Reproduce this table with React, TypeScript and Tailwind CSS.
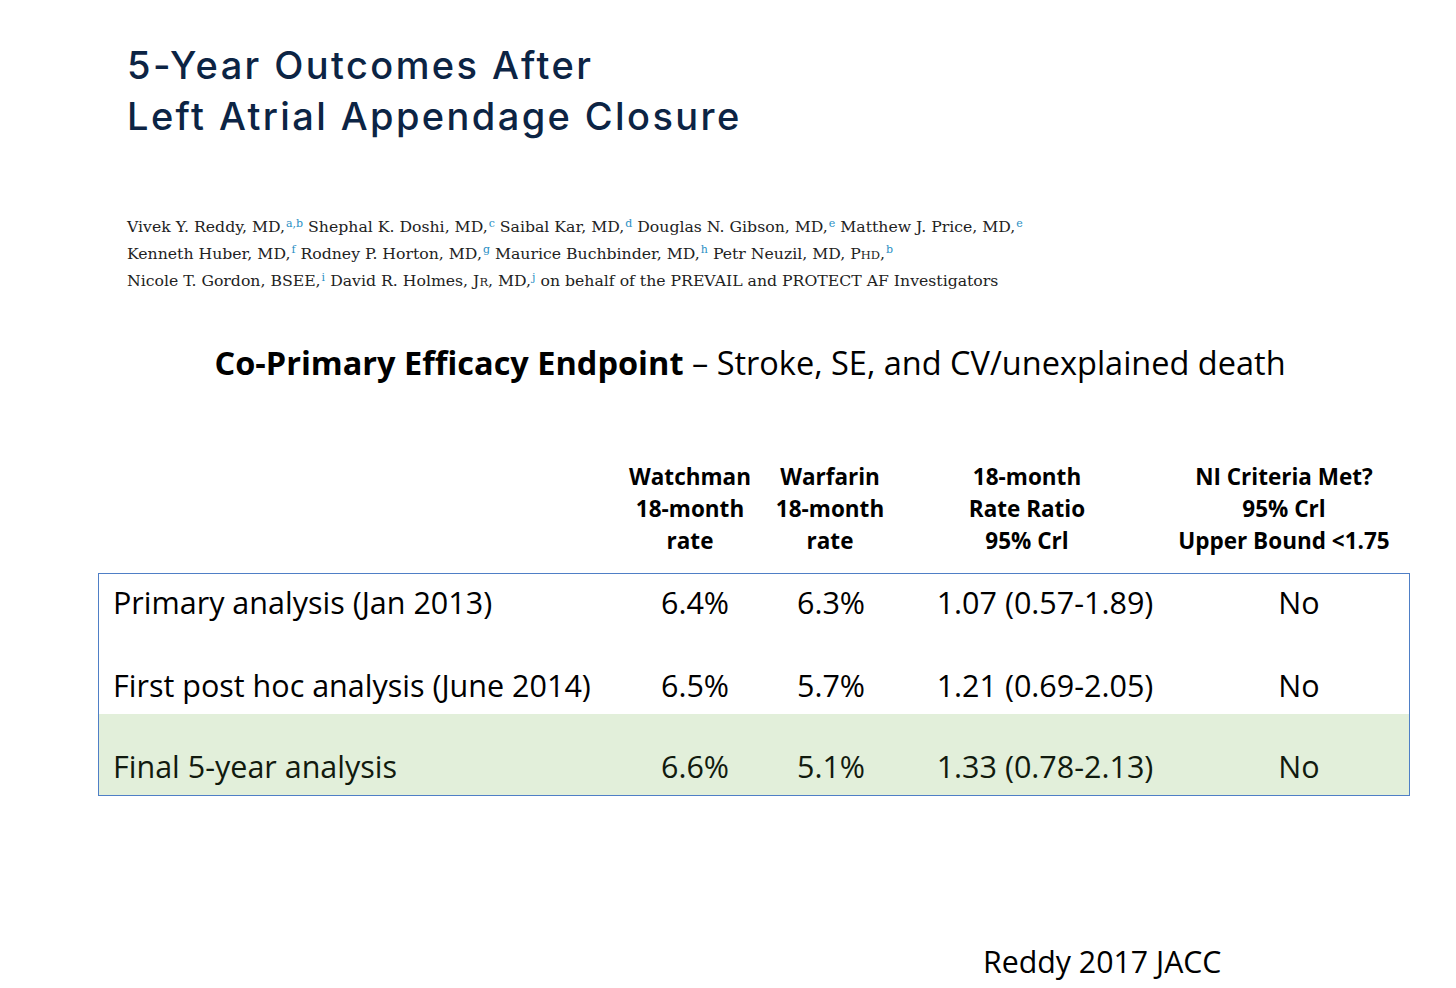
import React from "react";

function Sup({ children }: { children: React.ReactNode }) {
  return <sup className="text-[11px] text-[#2a8fc4] ml-[1px]">{children}</sup>;
}

const rows: [string, string, string, string, string, boolean, string][] = [
  ["Primary analysis (Jan 2013)", "6.4%", "6.3%", "1.07 (0.57-1.89)", "No", false, "h-[57px]"],
  ["First post hoc analysis (June 2014)", "6.5%", "5.7%", "1.21 (0.69-2.05)", "No", false, "h-[83px]"],
  ["Final 5-year analysis", "6.6%", "5.1%", "1.33 (0.78-2.13)", "No", true, "h-[81px]"],
];

export default function App() {
  return (
    <div className="w-[1456px] h-[988px] bg-white text-black overflow-hidden flex flex-col">
      <header className="pl-[127px] pt-[40px] flex flex-col">
        <h1 className="font-['Inter'] text-[38px] leading-[51px] font-medium tracking-[0.063em] text-[#0c2444]">
          5-Year Outcomes After
          <br />
          Left Atrial Appendage Closure
        </h1>
        <div className="mt-[72px] font-['DejaVu_Serif'] text-[15.7px] leading-[26.5px] text-[#222]">
          <div>
            Vivek Y. Reddy, MD,<Sup>a,b</Sup> Shephal K. Doshi, MD,<Sup>c</Sup> Saibal Kar, MD,<Sup>d</Sup> Douglas N. Gibson, MD,<Sup>e</Sup> Matthew J. Price, MD,<Sup>e</Sup>
          </div>
          <div>
            Kenneth Huber, MD,<Sup>f</Sup> Rodney P. Horton, MD,<Sup>g</Sup> Maurice Buchbinder, MD,<Sup>h</Sup> Petr Neuzil, MD, P<span className="text-[11.5px]">HD</span>,<Sup>b</Sup>
          </div>
          <div>
            Nicole T. Gordon, BSEE,<Sup>i</Sup> David R. Holmes, J<span className="text-[11.5px]">R</span>, MD,<Sup>j</Sup> on behalf of the PREVAIL and PROTECT AF Investigators
          </div>
        </div>
      </header>

      <div className="mt-[45px] flex justify-center pl-[44px] font-['Open_Sans']">
        <p className="text-[32.5px] leading-[44px] whitespace-nowrap">
          <span className="font-bold">Co-Primary Efficacy Endpoint</span> – Stroke, SE, and CV/unexplained death
        </p>
      </div>

      <section className="mt-[76px] pl-[98px] flex flex-col font-['Open_Sans']">
        <div className="grid grid-cols-[522px_140px_140px_254px_260px] text-[22.5px] leading-[32px] font-bold text-center">
          <div />
          <div>Watchman<br />18-month<br />rate</div>
          <div>Warfarin<br />18-month<br />rate</div>
          <div>18-month<br />Rate Ratio<br />95% Crl</div>
          <div>NI Criteria Met?<br />95% Crl<br />Upper Bound &lt;1.75</div>
        </div>
        <div className="mt-[16px] w-[1312px] border border-[#4f7fc6] text-[30.5px] leading-[40px] flex flex-col">
          {rows.map((r, i) => (
            <div
              key={i}
              className={`grid grid-cols-[521px_150px_122px_306px_1fr] items-end pb-[9px] ${r[6]} ${r[5] ? "bg-[#e2efda] text-[#111a0e]" : ""}`}
            >
              <div className="pl-[14px] whitespace-nowrap">{r[0]}</div>
              <div className="text-center">{r[1]}</div>
              <div className="text-center">{r[2]}</div>
              <div className="text-center whitespace-nowrap">{r[3]}</div>
              <div className="text-center pr-[9px]">{r[4]}</div>
            </div>
          ))}
        </div>
      </section>

      <footer className="mt-[146px] pl-[983px] font-['Open_Sans'] text-[30.3px] leading-[40px] whitespace-nowrap">
        Reddy 2017 JACC
      </footer>
    </div>
  );
}
